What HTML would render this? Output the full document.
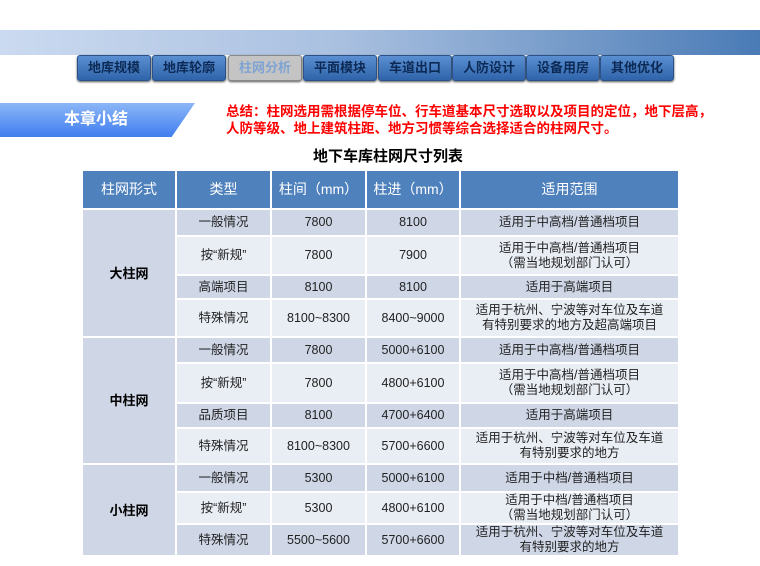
<!DOCTYPE html><html><head><meta charset="utf-8"><style>
body{margin:0;width:760px;height:566px;background:#fff;position:relative;overflow:hidden;font-family:"Liberation Sans","Noto Sans CJK SC",sans-serif}
.band{position:absolute;left:0;top:30px;width:760px;height:25px;background:linear-gradient(90deg,#cbdaf0,#a9c0e0 45%,#4a7bb6)}
.tab{position:absolute;top:55px;height:24px;width:72px;border:1px solid #2a5288;border-radius:3px;background:linear-gradient(#5b8fd2,#2f64aa);color:#0c2a55;font-size:13px;font-weight:bold;text-align:center;line-height:24px;box-shadow:0 1px 2px #555}
.tab.on{background:#c4c4c4;color:#7fa3d3;border-color:#888}
.sum{position:absolute;left:0;top:103px;width:195px;height:34px;background:linear-gradient(#8cb6f7,#3f7ef0);clip-path:polygon(0 0,100% 0,88% 100%,0 100%);color:#fff;font-weight:bold;font-size:16px;line-height:34px;text-indent:64px}
.red{position:absolute;left:226px;top:103px;color:#f00;font-weight:bold;font-size:13.5px;line-height:17px;white-space:nowrap}
.ttl{position:absolute;left:0;width:776px;top:145px;text-align:center;font-weight:bold;font-size:15px}
.c{position:absolute;display:flex;align-items:center;justify-content:center;text-align:center;font-size:12.5px;line-height:15px;color:#222}
.h{background:#4f81bd;color:#fff;font-size:14px}
.d{background:#cfd7e7}.l{background:#e9edf4}.b{font-weight:bold;font-size:13px;color:#000}
</style></head><body>
<div class="band"></div>
<div class="tab" style="left:77px">地库规模</div>
<div class="tab" style="left:152px">地库轮廓</div>
<div class="tab on" style="left:228px">柱网分析</div>
<div class="tab" style="left:303px">平面模块</div>
<div class="tab" style="left:378px">车道出口</div>
<div class="tab" style="left:452px">人防设计</div>
<div class="tab" style="left:526px">设备用房</div>
<div class="tab" style="left:600px">其他优化</div>
<div class="sum">本章小结</div>
<div class="red">总结：柱网选用需根据停车位、行车道基本尺寸选取以及项目的定位，地下层高，<br>人防等级、地上建筑柱距、地方习惯等综合选择适合的柱网尺寸。</div>
<div class="ttl">地下车库柱网尺寸列表</div>

<div class="c h" style="left:83px;top:171px;width:92px;height:37px">柱网形式</div>
<div class="c h" style="left:177px;top:171px;width:93px;height:37px">类型</div>
<div class="c h" style="left:272px;top:171px;width:93px;height:37px">柱间（mm）</div>
<div class="c h" style="left:367px;top:171px;width:92px;height:37px">柱进（mm）</div>
<div class="c h" style="left:461px;top:171px;width:217px;height:37px">适用范围</div>

<div class="c d b" style="left:83px;top:210px;width:92px;height:126px">大柱网</div>
<div class="c d b" style="left:83px;top:338px;width:92px;height:125px">中柱网</div>
<div class="c d b" style="left:83px;top:465px;width:92px;height:90px">小柱网</div>

<div class="c d" style="left:177px;top:210px;width:93px;height:25px">一般情况</div><div class="c d" style="left:272px;top:210px;width:93px;height:25px">7800</div><div class="c d" style="left:367px;top:210px;width:92px;height:25px">8100</div><div class="c d" style="left:461px;top:210px;width:217px;height:25px">适用于中高档/普通档项目</div>
<div class="c l" style="left:177px;top:237px;width:93px;height:37px">按“新规”</div><div class="c l" style="left:272px;top:237px;width:93px;height:37px">7800</div><div class="c l" style="left:367px;top:237px;width:92px;height:37px">7900</div><div class="c l" style="left:461px;top:237px;width:217px;height:37px">适用于中高档/普通档项目<br>（需当地规划部门认可）</div>
<div class="c d" style="left:177px;top:276px;width:93px;height:22px">高端项目</div><div class="c d" style="left:272px;top:276px;width:93px;height:22px">8100</div><div class="c d" style="left:367px;top:276px;width:92px;height:22px">8100</div><div class="c d" style="left:461px;top:276px;width:217px;height:22px">适用于高端项目</div>
<div class="c l" style="left:177px;top:300px;width:93px;height:36px">特殊情况</div><div class="c l" style="left:272px;top:300px;width:93px;height:36px">8100~8300</div><div class="c l" style="left:367px;top:300px;width:92px;height:36px">8400~9000</div><div class="c l" style="left:461px;top:300px;width:217px;height:36px">适用于杭州、宁波等对车位及车道<br>有特别要求的地方及超高端项目</div>

<div class="c d" style="left:177px;top:338px;width:93px;height:24px">一般情况</div><div class="c d" style="left:272px;top:338px;width:93px;height:24px">7800</div><div class="c d" style="left:367px;top:338px;width:92px;height:24px">5000+6100</div><div class="c d" style="left:461px;top:338px;width:217px;height:24px">适用于中高档/普通档项目</div>
<div class="c l" style="left:177px;top:364px;width:93px;height:38px">按“新规”</div><div class="c l" style="left:272px;top:364px;width:93px;height:38px">7800</div><div class="c l" style="left:367px;top:364px;width:92px;height:38px">4800+6100</div><div class="c l" style="left:461px;top:364px;width:217px;height:38px">适用于中高档/普通档项目<br>（需当地规划部门认可）</div>
<div class="c d" style="left:177px;top:404px;width:93px;height:23px">品质项目</div><div class="c d" style="left:272px;top:404px;width:93px;height:23px">8100</div><div class="c d" style="left:367px;top:404px;width:92px;height:23px">4700+6400</div><div class="c d" style="left:461px;top:404px;width:217px;height:23px">适用于高端项目</div>
<div class="c l" style="left:177px;top:429px;width:93px;height:34px">特殊情况</div><div class="c l" style="left:272px;top:429px;width:93px;height:34px">8100~8300</div><div class="c l" style="left:367px;top:429px;width:92px;height:34px">5700+6600</div><div class="c l" style="left:461px;top:429px;width:217px;height:34px">适用于杭州、宁波等对车位及车道<br>有特别要求的地方</div>

<div class="c d" style="left:177px;top:465px;width:93px;height:26px">一般情况</div><div class="c d" style="left:272px;top:465px;width:93px;height:26px">5300</div><div class="c d" style="left:367px;top:465px;width:92px;height:26px">5000+6100</div><div class="c d" style="left:461px;top:465px;width:217px;height:26px">适用于中档/普通档项目</div>
<div class="c l" style="left:177px;top:493px;width:93px;height:30px">按“新规”</div><div class="c l" style="left:272px;top:493px;width:93px;height:30px">5300</div><div class="c l" style="left:367px;top:493px;width:92px;height:30px">4800+6100</div><div class="c l" style="left:461px;top:493px;width:217px;height:30px">适用于中档/普通档项目<br>（需当地规划部门认可）</div>
<div class="c d" style="left:177px;top:525px;width:93px;height:30px">特殊情况</div><div class="c d" style="left:272px;top:525px;width:93px;height:30px">5500~5600</div><div class="c d" style="left:367px;top:525px;width:92px;height:30px">5700+6600</div><div class="c d" style="left:461px;top:525px;width:217px;height:30px">适用于杭州、宁波等对车位及车道<br>有特别要求的地方</div>
</body></html>
